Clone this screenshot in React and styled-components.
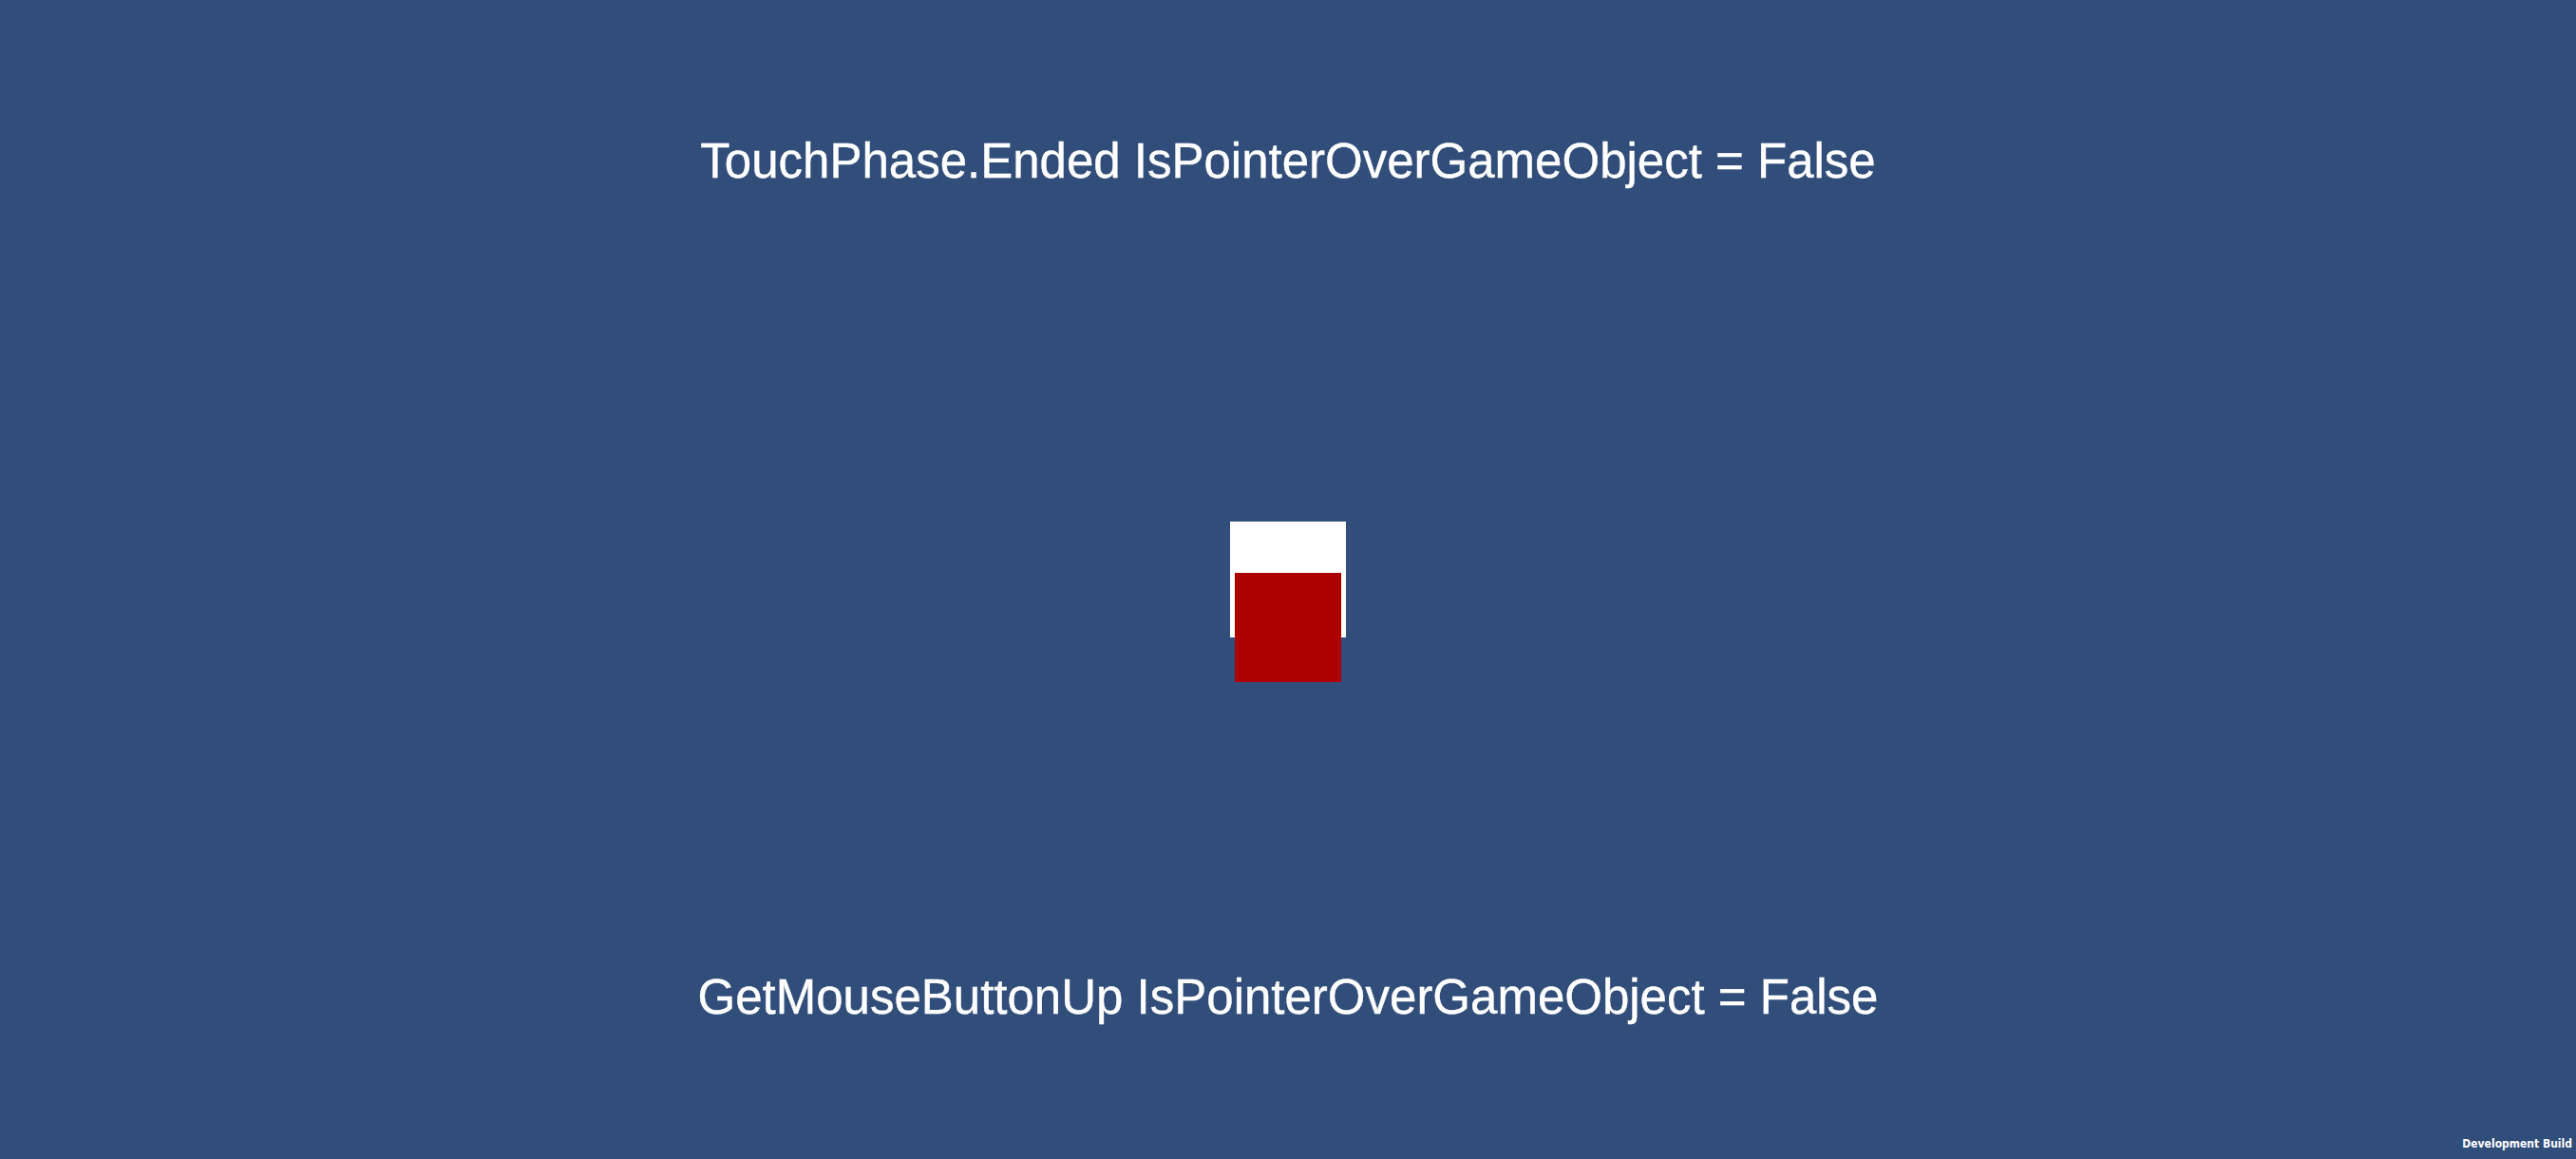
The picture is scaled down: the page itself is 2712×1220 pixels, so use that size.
import React from "react";
import styled, { createGlobalStyle } from "styled-components";

const GlobalStyle = createGlobalStyle`
  html, body {
    margin: 0;
    padding: 0;
    background: #314d79;
  }
`;

export default function App() {
  return (
    <>
      <GlobalStyle />
      <GameView>
        <StatusLabel $offset={140}>
          TouchPhase.Ended IsPointerOverGameObject = False
        </StatusLabel>
        <Target>
          <Panel />
          <Marker />
        </Target>
        <StatusLabel $offset={302}>
          GetMouseButtonUp IsPointerOverGameObject = False
        </StatusLabel>
        <BuildTag>Development Build</BuildTag>
      </GameView>
    </>
  );
}

const GameView = styled.main`
  position: relative;
  width: 2712px;
  height: 1220px;
  overflow: hidden;
  background: #314d79;
  display: flex;
  flex-direction: column;
  align-items: center;
`;

const StatusLabel = styled.div`
  margin-top: ${(p) => p.$offset}px;
  height: 60px;
  line-height: 60px;
  font-family: "Liberation Sans", Arial, sans-serif;
  font-size: 51px;
  color: #ffffff;
  white-space: nowrap;
  -webkit-text-stroke: 0.4px #ffffff;
`;

const Target = styled.div`
  margin-top: 349px;
  display: flex;
  flex-direction: column;
  align-items: center;
  height: 169px;
`;

const Panel = styled.div`
  width: 122px;
  height: 122px;
  background: #ffffff;
`;

const Marker = styled.div`
  position: relative;
  margin-top: -68px;
  width: 112px;
  height: 115px;
  background: #ad0000;
`;

const BuildTag = styled.span`
  position: absolute;
  right: 4px;
  bottom: 9px;
  font-family: "DejaVu Sans Condensed", "DejaVu Sans", sans-serif;
  font-stretch: condensed;
  font-weight: bold;
  font-size: 12px;
  line-height: 14px;
  color: #ffffff;
`;
